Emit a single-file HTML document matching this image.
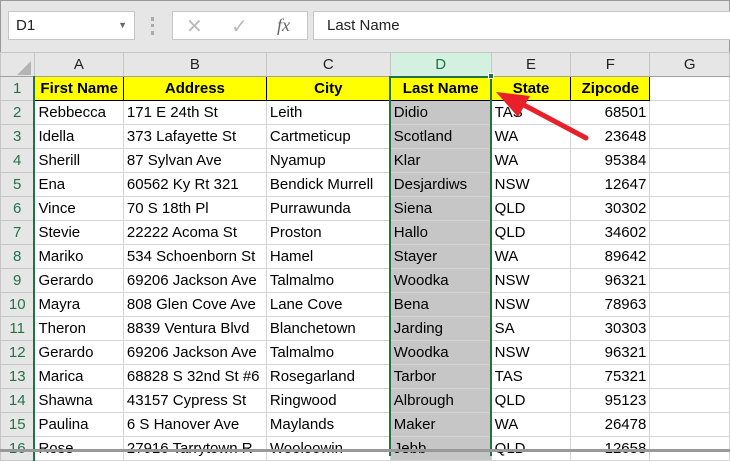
<!DOCTYPE html>
<html><head><style>
*{margin:0;padding:0;box-sizing:border-box}
body{width:730px;height:452px;overflow:hidden;background:#fff;font-family:"Liberation Sans",sans-serif;position:relative}
.tb{position:absolute;left:0;top:0;width:730px;height:52px;background:#e6e6e6;border-top:1px solid #999;border-left:1px solid #999;border-right:1px solid #999}
.nb{position:absolute;left:7px;top:10px;width:127px;height:29px;background:#fff;border:1px solid #c6c6c6;font-size:15px;line-height:27px;padding-left:7px;color:#222}
.fx{position:absolute;left:171px;top:10px;width:136px;height:29px;background:#fff;border:1px solid #c6c6c6}
.fb{position:absolute;left:312px;top:10px;width:420px;height:29px;background:#fff;border:1px solid #c6c6c6;font-size:15px;line-height:27px;padding-left:13px;color:#222}
table{position:absolute;left:0;top:52px;border-collapse:collapse;table-layout:fixed;font-size:15px}
td{height:24px;border:1px solid #d4d4d4;padding:0 3px;white-space:nowrap;overflow:hidden;color:#000}
tr.h td{background:#e6e6e6;text-align:center;color:#222;font-size:15px;border-color:#c6c6c6 #c6c6c6 #a0a0a0}
td.r{background:#e6e6e6;text-align:center;color:#217346;border-color:#c6c6c6;border-right:2px solid #217346}
tr.y td.c{background:#ff0;font-weight:bold;text-align:center;border:1px solid #000}
td.d{background:#c6c6c6}
td.n{text-align:right}
</style></head><body>
<div class="tb">
<div class="nb">D1<span style="position:absolute;right:7px;top:0;font-size:9px;color:#666">▼</span></div>
<div style="position:absolute;left:150px;top:16px;width:3px;height:18px;border-left:3px dotted #aaa"></div>
<div class="fx"><span style="position:absolute;left:13px;top:2px;font-size:20px;color:#bbb">✕</span><span style="position:absolute;left:58px;top:2px;font-size:20px;color:#bbb">✓</span><span style="position:absolute;left:104px;top:3px;font-size:18px;font-style:italic;font-family:'Liberation Serif',serif;color:#666">fx</span></div>
<div class="fb">Last Name</div>
</div>
<table>
<colgroup><col style="width:34px"><col style="width:89px"><col style="width:143px"><col style="width:124px"><col style="width:101px"><col style="width:80px"><col style="width:79px"><col style="width:80px"></colgroup>
<tr class="h"><td style="background:#e6e6e6"><svg width="20" height="20" style="position:absolute;left:12px;top:4px"><polygon points="18,4 18,18 4,18" fill="#b4b4b4"/></svg></td><td>A</td><td>B</td><td>C</td><td style="background:#d3f0e0;color:#217346;border-bottom:2px solid #217346">D</td><td>E</td><td>F</td><td>G</td></tr>
<tr class="y"><td class="r">1</td><td class="c">First Name</td><td class="c">Address</td><td class="c">City</td><td class="c">Last Name</td><td class="c">State</td><td class="c">Zipcode</td><td></td></tr>
<tr><td class="r">2</td><td>Rebbecca</td><td>171 E 24th St</td><td>Leith</td><td class="d">Didio</td><td>TAS</td><td class="n">68501</td><td></td></tr>
<tr><td class="r">3</td><td>Idella</td><td>373 Lafayette St</td><td>Cartmeticup</td><td class="d">Scotland</td><td>WA</td><td class="n">23648</td><td></td></tr>
<tr><td class="r">4</td><td>Sherill</td><td>87 Sylvan Ave</td><td>Nyamup</td><td class="d">Klar</td><td>WA</td><td class="n">95384</td><td></td></tr>
<tr><td class="r">5</td><td>Ena</td><td>60562 Ky Rt 321</td><td>Bendick Murrell</td><td class="d">Desjardiws</td><td>NSW</td><td class="n">12647</td><td></td></tr>
<tr><td class="r">6</td><td>Vince</td><td>70 S 18th Pl</td><td>Purrawunda</td><td class="d">Siena</td><td>QLD</td><td class="n">30302</td><td></td></tr>
<tr><td class="r">7</td><td>Stevie</td><td>22222 Acoma St</td><td>Proston</td><td class="d">Hallo</td><td>QLD</td><td class="n">34602</td><td></td></tr>
<tr><td class="r">8</td><td>Mariko</td><td>534 Schoenborn St</td><td>Hamel</td><td class="d">Stayer</td><td>WA</td><td class="n">89642</td><td></td></tr>
<tr><td class="r">9</td><td>Gerardo</td><td>69206 Jackson Ave</td><td>Talmalmo</td><td class="d">Woodka</td><td>NSW</td><td class="n">96321</td><td></td></tr>
<tr><td class="r">10</td><td>Mayra</td><td>808 Glen Cove Ave</td><td>Lane Cove</td><td class="d">Bena</td><td>NSW</td><td class="n">78963</td><td></td></tr>
<tr><td class="r">11</td><td>Theron</td><td>8839 Ventura Blvd</td><td>Blanchetown</td><td class="d">Jarding</td><td>SA</td><td class="n">30303</td><td></td></tr>
<tr><td class="r">12</td><td>Gerardo</td><td>69206 Jackson Ave</td><td>Talmalmo</td><td class="d">Woodka</td><td>NSW</td><td class="n">96321</td><td></td></tr>
<tr><td class="r">13</td><td>Marica</td><td>68828 S 32nd St #6</td><td>Rosegarland</td><td class="d">Tarbor</td><td>TAS</td><td class="n">75321</td><td></td></tr>
<tr><td class="r">14</td><td>Shawna</td><td>43157 Cypress St</td><td>Ringwood</td><td class="d">Albrough</td><td>QLD</td><td class="n">95123</td><td></td></tr>
<tr><td class="r">15</td><td>Paulina</td><td>6 S Hanover Ave</td><td>Maylands</td><td class="d">Maker</td><td>WA</td><td class="n">26478</td><td></td></tr>
<tr><td class="r">16</td><td>Rose</td><td>27916 Tarrytown R</td><td>Wooloowin</td><td class="d">Jebb</td><td>QLD</td><td class="n">12658</td><td></td></tr>
</table>
<div style="position:absolute;left:389px;top:76px;width:103px;height:380px;border-left:2px solid #217346;border-right:2px solid #217346;border-top:2px solid #217346"></div>
<div style="position:absolute;left:488px;top:73px;width:6px;height:6px;background:#217346;border:1px solid #fff"></div>
<div style="position:absolute;left:0;top:449px;width:730px;height:3px;background:#999"></div>
<svg style="position:absolute;left:0;top:0" width="730" height="452"><line x1="586" y1="138" x2="522" y2="104" stroke="#e8202a" stroke-width="5" stroke-linecap="round"/><polygon points="496,92 530,96 518,117" fill="#e8202a"/></svg>
</body></html>
